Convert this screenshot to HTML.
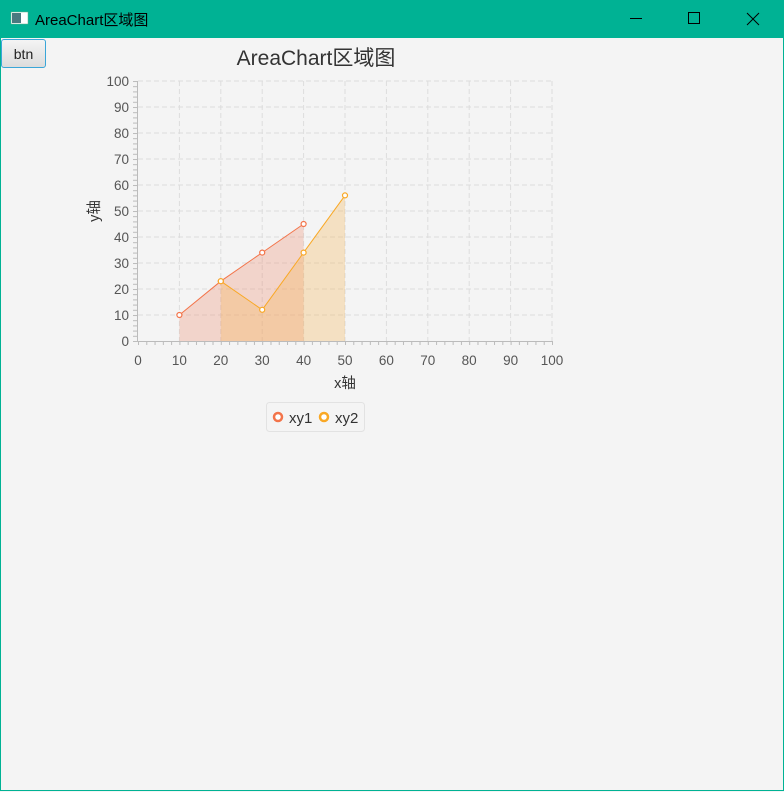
<!DOCTYPE html>
<html><head><meta charset="utf-8"><style>
body{margin:0;width:784px;height:792px;overflow:hidden;background:#f4f4f4;font-family:"Liberation Sans","Noto Sans CJK SC",sans-serif;}
.win{position:absolute;left:0;top:0;width:782px;height:790px;border:1px solid #00b294;border-top:none;}
.tb{position:absolute;left:0;top:0;width:784px;height:38px;background:#00b294;}
.btn{position:absolute;left:1px;top:39px;width:45px;height:29px;border:1px solid #3aa6d8;border-radius:3px;background:linear-gradient(#f4f4f4,#dcdcdc);font-size:14px;color:#222;text-align:center;line-height:28px;box-sizing:border-box}
</style></head><body>
<div class="tb"></div>
<div class="win"></div>
<svg width="784" height="792" style="position:absolute;left:0;top:0" font-family="Liberation Sans, Noto Sans CJK SC, sans-serif">
<rect x="11" y="12" width="17" height="12" fill="#fff" stroke="#6a8" stroke-width="0.5"/>
<rect x="12" y="13" width="9" height="10" fill="#4a7a80"/>
<text x="35" y="25" font-size="15" fill="#000">AreaChart区域图</text>
<line x1="630" y1="18.5" x2="642" y2="18.5" stroke="#000"/>
<rect x="688.5" y="12.5" width="11" height="11" fill="none" stroke="#000"/>
<path d="M747 13L759 25M759 13L747 25" stroke="#000"/>
<text x="316" y="65" font-size="21" fill="#333" text-anchor="middle">AreaChart区域图</text>
<g stroke="#ddd" stroke-dasharray="5,3">
<line x1="138" y1="81" x2="552" y2="81"/><line x1="138" y1="107" x2="552" y2="107"/><line x1="138" y1="133" x2="552" y2="133"/><line x1="138" y1="159" x2="552" y2="159"/><line x1="138" y1="185" x2="552" y2="185"/><line x1="138" y1="211" x2="552" y2="211"/><line x1="138" y1="237" x2="552" y2="237"/><line x1="138" y1="263" x2="552" y2="263"/><line x1="138" y1="289" x2="552" y2="289"/><line x1="138" y1="315" x2="552" y2="315"/>
<line x1="179.4" y1="81" x2="179.4" y2="341"/><line x1="220.8" y1="81" x2="220.8" y2="341"/><line x1="262.2" y1="81" x2="262.2" y2="341"/><line x1="303.6" y1="81" x2="303.6" y2="341"/><line x1="345" y1="81" x2="345" y2="341"/><line x1="386.4" y1="81" x2="386.4" y2="341"/><line x1="427.8" y1="81" x2="427.8" y2="341"/><line x1="469.2" y1="81" x2="469.2" y2="341"/><line x1="510.6" y1="81" x2="510.6" y2="341"/><line x1="552" y1="81" x2="552" y2="341"/>
</g>
<polygon points="179.4,341 179.4,315 220.8,281.2 262.2,252.6 303.6,224 303.6,341" fill="rgba(238,140,110,0.3)"/>
<polygon points="220.8,341 220.8,281.2 262.2,309.8 303.6,252.6 345,195.4 345,341" fill="rgba(245,180,80,0.3)"/>
<polyline points="179.4,315 220.8,281.2 262.2,252.6 303.6,224" fill="none" stroke="#f3744a" stroke-width="1"/>
<polyline points="220.8,281.2 262.2,309.8 303.6,252.6 345,195.4" fill="none" stroke="#f9a825" stroke-width="1"/>
<g fill="#fff" stroke="#f3744a" stroke-width="1.2"><circle cx="179.4" cy="315" r="2.5"/><circle cx="220.8" cy="281.2" r="2.5"/><circle cx="262.2" cy="252.6" r="2.5"/><circle cx="303.6" cy="224" r="2.5"/></g>
<g fill="#fff" stroke="#f9a825" stroke-width="1.2"><circle cx="220.8" cy="281.2" r="2.5"/><circle cx="262.2" cy="309.8" r="2.5"/><circle cx="303.6" cy="252.6" r="2.5"/><circle cx="345" cy="195.4" r="2.5"/></g>
<defs>
<pattern id="xm" patternUnits="userSpaceOnUse" x="138" y="0" width="8.28" height="800"><line x1="0.5" y1="341" x2="0.5" y2="345" stroke="#bbb"/></pattern>
<pattern id="ym" patternUnits="userSpaceOnUse" x="0" y="81" width="800" height="5.2"><line x1="133" y1="0.5" x2="138" y2="0.5" stroke="#bbb"/></pattern>
</defs>
<rect x="138" y="341" width="415" height="5" fill="url(#xm)"/>
<rect x="133" y="81" width="5" height="261" fill="url(#ym)"/>
<line x1="138" y1="341.5" x2="552" y2="341.5" stroke="#bbb"/>
<line x1="137.5" y1="81" x2="137.5" y2="341" stroke="#bbb"/>
<g font-size="13.5" fill="#555" text-anchor="middle">
<text x="138" y="365">0</text><text x="179.4" y="365">10</text><text x="220.8" y="365">20</text><text x="262.2" y="365">30</text><text x="303.6" y="365">40</text><text x="345" y="365">50</text><text x="386.4" y="365">60</text><text x="427.8" y="365">70</text><text x="469.2" y="365">80</text><text x="510.6" y="365">90</text><text x="552" y="365">100</text>
</g>
<g font-size="13.5" fill="#555" text-anchor="end">
<text x="129" y="86">100</text><text x="129" y="112">90</text><text x="129" y="138">80</text><text x="129" y="164">70</text><text x="129" y="190">60</text><text x="129" y="216">50</text><text x="129" y="242">40</text><text x="129" y="268">30</text><text x="129" y="294">20</text><text x="129" y="320">10</text><text x="129" y="346">0</text>
</g>
<text x="345" y="388" font-size="14.5" fill="#333" text-anchor="middle">x轴</text>
<text transform="translate(99,211) rotate(-90)" font-size="14.5" fill="#333" text-anchor="middle">y轴</text>
<rect x="266.5" y="402.5" width="98" height="29" rx="3" fill="#f4f4f4" stroke="#e2e2e2"/>
<circle cx="278" cy="417" r="4" fill="#fff" stroke="#f3744a" stroke-width="2.5"/>
<text x="289" y="423" font-size="15" fill="#333">xy1</text>
<circle cx="324" cy="417" r="4" fill="#fff" stroke="#f9a825" stroke-width="2.5"/>
<text x="335" y="423" font-size="15" fill="#333">xy2</text>
</svg>
<div class="btn">btn</div>
</body></html>
